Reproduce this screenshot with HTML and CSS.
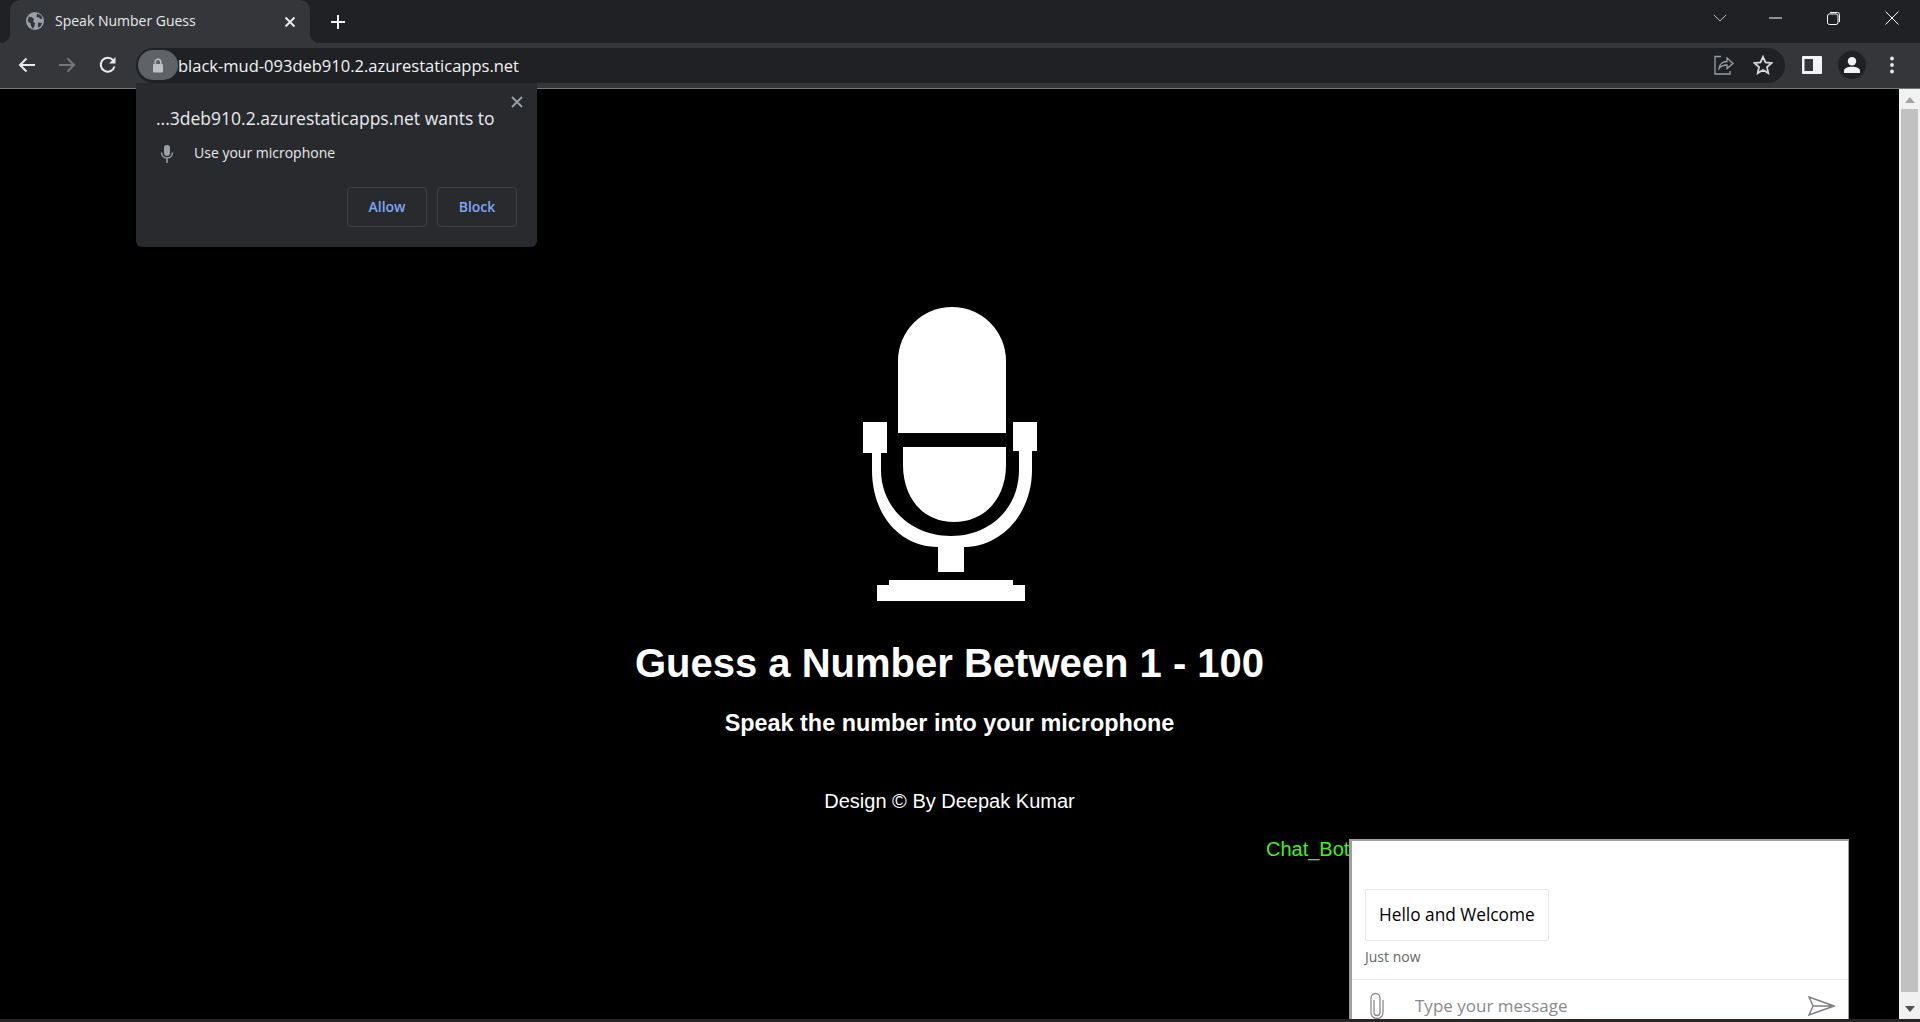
FILE: index.html
```html
<!DOCTYPE html>
<html lang="en">
<head>
  <meta charset="UTF-8">
  <title>Speak Number Guess</title>
  <link rel="stylesheet" href="styles.css">
</head>
<body>
  <div class="tabstrip">
    <div class="tab">
      <svg class="favicon" width="18" height="18" viewBox="0 0 18 18"><circle cx="9" cy="9" r="9" fill="#9aa0a6"/><path d="M3 4.500l3.500 1 1.500 2-1 2 2 1.500-.5 3-1.500 3-2-3-.5-2.500-3-2.500zM11 1.500l4 2 1.500 3-2 .5-1.500-1.500-2.500-.5zM12 10.500l4 .5-1.500 3.500-2.500 1z" fill="#35363a"/></svg>
      <span class="tab-title">Speak Number Guess</span>
      <svg class="tab-close" width="12" height="12" viewBox="0 0 12 12"><path d="M1.500 1.500l9 9M10.500 1.500l-9 9" stroke="#e8eaed" stroke-width="2"/></svg>
    </div>
    <svg class="new-tab" width="16" height="16" viewBox="0 0 16 16"><path d="M8 1v14M1 8h14" stroke="#f1f3f4" stroke-width="2"/></svg>
    <div class="win-controls">
      <button class="win-btn chevron"><svg width="14" height="8" viewBox="0 0 14 8"><path d="M1 1l6 6 6-6" fill="none" stroke="#bdc1c6"/></svg></button>
      <button class="win-btn"><svg width="14" height="14" viewBox="0 0 14 14"><path d="M0 7h13" stroke="#fff"/></svg></button>
      <button class="win-btn"><svg width="14" height="14" viewBox="0 0 14 14"><path d="M3 1.500h7.500a2 2 0 0 1 2 2V11" fill="none" stroke="#fff"/><rect x=".5" y="3" width="10.500" height="10.500" rx="2" fill="none" stroke="#fff"/></svg></button>
      <button class="win-btn"><svg width="14" height="14" viewBox="0 0 14 14"><path d="M.5.500l13 13M13.500.500l-13 13" stroke="#fff"/></svg></button>
    </div>
  </div>

  <div class="toolbar">
    <button class="tool-btn"><svg width="18" height="16" viewBox="0 0 18 16"><path d="M17 8H2M8.500 1.500L2 8l6.500 6.500" fill="none" stroke="#e8eaed" stroke-width="2"/></svg></button>
    <button class="tool-btn"><svg width="18" height="16" viewBox="0 0 18 16"><path d="M1 8h15M9.500 1.500L16 8l-6.500 6.500" fill="none" stroke="#75777b" stroke-width="2"/></svg></button>
    <button class="tool-btn"><svg width="18" height="18" viewBox="0 0 18 18"><path d="M15.500 10.500A7 7 0 1 1 14 4" fill="none" stroke="#e8eaed" stroke-width="2"/><path d="M16.500 1v6.500H10z" fill="#e8eaed"/></svg></button>
    <div class="omnibox">
      <span class="lock"><svg width="12" height="15" viewBox="0 0 12 15"><rect x="1" y="6" width="10" height="8.500" rx="1" fill="#bdc1c6"/><path d="M3.200 6.500V4a2.800 2.800 0 0 1 5.600 0v2.500" fill="none" stroke="#bdc1c6" stroke-width="1.400"/></svg></span>
      <span class="url">black-mud-093deb910.2.azurestaticapps.net</span>
      <button class="tool-btn omni-icon"><svg width="20" height="20" viewBox="0 0 20 20"><path d="M7 1.500H1v17.500h15v-3" fill="none" stroke="#9aa0a6" stroke-width="1.300"/><path d="M5 13.500c.5-4.500 4-7 8-7V3l6 5.500-6 5v-3.500c-3.500 0-6 1-8 3.500z" fill="none" stroke="#9aa0a6" stroke-width="1.300"/></svg></button>
      <button class="tool-btn omni-icon star"><svg width="20" height="20" viewBox="0 0 20 20"><path d="M10 1.800l2.500 5.600 6.100.6-4.600 4.100 1.300 6-5.300-3.100-5.300 3.100 1.300-6L1.400 8l6.100-.6z" fill="none" stroke="#d6d8da" stroke-width="1.800"/></svg></button>
    </div>
    <button class="tool-btn"><svg width="20" height="18" viewBox="0 0 20 18"><rect width="20" height="18" rx="1" fill="#f1f3f4"/><rect x="2.500" y="3" width="8.500" height="12" fill="#35363a"/></svg></button>
    <button class="tool-btn"><span class="avatar"><svg width="18" height="16" viewBox="0 0 18 16"><circle cx="9" cy="4.300" r="4.200" fill="#f1f3f4"/><path d="M1 16v-2.200c0-2.800 4-4 8-4s8 1.200 8 4V16z" fill="#f1f3f4"/></svg></span></button>
    <button class="tool-btn"><svg width="4" height="18" viewBox="0 0 4 18"><circle cx="2" cy="2.500" r="1.900" fill="#e8eaed"/><circle cx="2" cy="9" r="1.900" fill="#e8eaed"/><circle cx="2" cy="15.500" r="1.900" fill="#e8eaed"/></svg></button>
  </div>

  <div class="viewport">
    <main class="page">
      <svg class="mic" width="220" height="320" viewBox="0 0 220 320">
        <path d="M58 143V71a54 54 0 0 1 108 0v72z" fill="#fff"/>
        <path d="M63 157h103v18c0 33-21 57-52 57s-51-24-51-57z" fill="#fff"/>
        <path d="M23 132h24v31h-6v17c0 38 31 66 70 66s68-28 68-66v-19h-6v-29h24v29h-5v19c0 45-32 77-68 77v25H98v-25c-38 0-66-32-66-77v-17h-9z" fill="#fff"/>
        <path d="M49 290h124v5h12v16H37v-16h12z" fill="#fff"/>
      </svg>
      <h1 class="title">Guess a Number Between 1 - 100</h1>
      <h3 class="subtitle">Speak the number into your microphone</h3>
      <p class="credit">Design © By Deepak Kumar</p>
      <div class="bot-row"><span class="bot-label">Chat_Bot</span></div>

      <div class="permission">
        <svg class="perm-close" width="12" height="12" viewBox="0 0 12 12"><path d="M1 1l10 10M11 1L1 11" stroke="#9aa0a6" stroke-width="1.800"/></svg>
        <div class="perm-title">...3deb910.2.azurestaticapps.net wants to</div>
        <div class="perm-row">
          <svg width="14" height="20" viewBox="0 0 14 20"><rect x="4" y="1" width="6" height="11" rx="3" fill="#9aa0a6"/><path d="M1.500 8.500c0 3.500 2.500 5.500 5.500 5.500s5.500-2 5.500-5.500M7 14v5" fill="none" stroke="#9aa0a6" stroke-width="1.500"/></svg>
          <span class="perm-text">Use your microphone</span>
        </div>
        <div class="perm-actions">
          <button class="perm-btn">Allow</button>
          <button class="perm-btn">Block</button>
        </div>
      </div>

      <div class="chat">
        <div class="chat-log">
          <div class="bubble">Hello and Welcome</div>
          <div class="stamp">Just now</div>
        </div>
        <div class="chat-input">
          <svg class="clip" width="14" height="27" viewBox="0 0 14 27"><path d="M4 8v12.500a3 3 0 0 0 6 0V6a4.500 4.500 0 0 0-9 0v14.500a6 6 0 0 0 12 0V8" fill="none" stroke="#8a8a8a" stroke-width="1.300"/></svg>
          <span class="placeholder">Type your message</span>
          <svg width="27" height="20" viewBox="0 0 27 20"><path d="M1 1l25 9L1 19l4-9zM5 10h21" fill="none" stroke="#7f7f7f" stroke-width="1.400"/></svg>
        </div>
      </div>
    </main>
    <div class="scrollbar">
      <span class="arrow-up"></span>
      <span class="thumb"></span>
      <span class="arrow-down"></span>
    </div>
  </div>
  <div class="taskbar-edge"></div>
</body>
</html>
```

FILE: styles.css
```css
* {
  box-sizing: border-box;
}
html, body {
  height: 100%;
}
body {
  margin: 0;
  display: flex;
  flex-direction: column;
  overflow: hidden;
  background: #000;
  font-family: "Open Sans", sans-serif;
}
button {
  border: none;
  background: none;
  padding: 0;
  font-family: inherit;
}

/* browser chrome */
.tabstrip {
  flex: none;
  height: 43px;
  display: flex;
  align-items: center;
  background: #202124;
}
.tab {
  position: relative;
  align-self: flex-end;
  width: 300px;
  height: 43px;
  margin-left: 10px;
  padding: 0 14px 0 16px;
  display: flex;
  align-items: center;
  background: #35363a;
  border-radius: 10px 10px 0 0;
}
.tab::before,
.tab::after {
  content: "";
  position: absolute;
  bottom: 0;
  width: 10px;
  height: 10px;
}
.tab::before {
  left: -10px;
  background: radial-gradient(circle at 0 0, transparent 10px, #35363a 10.5px);
}
.tab::after {
  right: -10px;
  background: radial-gradient(circle at 100% 0, transparent 10px, #35363a 10.5px);
}
.favicon {
  flex: none;
  margin-top: -1px;
}
.tab-title {
  flex: 1;
  margin: 0 0 2px 11px;
  font-size: 14px;
  color: #e8eaed;
  white-space: nowrap;
}
.new-tab {
  margin-left: 20px;
}
.win-controls {
  margin-left: auto;
  height: 100%;
  display: flex;
}
.win-btn {
  width: 58px;
  height: 36px;
  display: flex;
  align-items: center;
  justify-content: center;
}
.win-btn:last-child {
  margin-right: -1px;
}
.chevron {
  width: 38px;
  margin-right: 8px;
}
.toolbar {
  flex: none;
  height: 46px;
  padding: 0 8px 1px 7px;
  display: flex;
  align-items: center;
  background: #35363a;
  border-bottom: 1px solid #75777b;
}
.tool-btn {
  flex: none;
  width: 40px;
  height: 36px;
  display: flex;
  align-items: center;
  justify-content: center;
}
.tool-btn:nth-child(3) {
  margin-left: 1px;
}
.omnibox {
  flex: 1;
  height: 35px;
  margin: 0 7px 0 8px;
  padding: 0 3px 0 2px;
  display: flex;
  align-items: center;
  background: #202124;
  border-radius: 18px;
}
.lock {
  width: 40px;
  height: 30px;
  display: flex;
  align-items: center;
  justify-content: center;
  background: #5f6368;
  border-radius: 15px;
}
.url {
  flex: 1;
  font-size: 16.500px;
  color: #f1f3f4;
}
.omni-icon {
  width: 39px;
}
.avatar {
  width: 28px;
  height: 28px;
  display: flex;
  align-items: center;
  justify-content: center;
  background: #202124;
  border-radius: 50%;
}

/* page */
.viewport {
  flex: 1;
  min-height: 0;
  display: flex;
}
.page {
  position: relative;
  flex: 1;
  padding-top: 201px;
  display: flex;
  flex-direction: column;
  align-items: center;
  background: #000;
  color: #fff;
  font-family: "Liberation Sans", Arial, sans-serif;
}
.mic {
  display: block;
}
.title {
  margin: 30px 0 0;
  font-size: 40px;
  line-height: 46px;
}
.subtitle {
  margin: 24px 0 0;
  font-size: 23.400px;
  line-height: 27px;
}
.credit {
  margin: 53px 0 0;
  font-size: 20px;
  line-height: 23px;
}
.bot-row {
  align-self: stretch;
  margin-top: 25px;
  padding-left: 1266px;
}
.bot-label {
  font-size: 20px;
  line-height: 23px;
  color: #40f020;
}

/* permission prompt */
.permission {
  position: absolute;
  top: -6px;
  left: 136px;
  width: 401px;
  height: 164px;
  padding: 24px 20px 0;
  background: #292a2d;
  border-radius: 0 0 6px 6px;
  color: #e8eaed;
  font-family: "Open Sans", sans-serif;
}
.perm-close {
  position: absolute;
  top: 13px;
  right: 14px;
}
.perm-title {
  font-size: 17.500px;
  line-height: 22px;
  white-space: nowrap;
}
.perm-row {
  margin-top: 14px;
  padding-left: 4px;
  display: flex;
  align-items: center;
  gap: 20px;
  font-size: 14px;
}
.perm-text {
  margin-bottom: 2px;
}
.perm-actions {
  margin-top: 23px;
  display: flex;
  justify-content: flex-end;
  gap: 10px;
}
.perm-btn {
  width: 80px;
  height: 40px;
  padding-bottom: 2px;
  border: 1px solid #3c4043;
  border-radius: 4px;
  font-size: 14px;
  font-weight: 600;
  color: #7ea6f4;
}

/* chat widget */
.chat {
  position: absolute;
  left: 1349px;
  top: 750px;
  width: 500px;
  bottom: 0;
  overflow: hidden;
  background: #fff;
  border: 2px solid #a0a0a0;
  border-bottom: none;
  border-left-width: 3px;
  border-right-width: 1px;
  color: #000;
  font-family: "Open Sans", sans-serif;
}
.chat-log {
  height: 139px;
  padding: 48px 13px 0;
  border-bottom: 1px solid #e6e6e6;
}
.bubble {
  display: inline-block;
  height: 52px;
  padding: 0 13px;
  line-height: 50px;
  border: 1px solid #e6e6e6;
  border-radius: 2px;
  font-size: 17.300px;
}
.stamp {
  margin-top: 6px;
  font-size: 14px;
  color: #666;
}
.chat-input {
  height: 52px;
  padding: 0 13px 0 18px;
  display: flex;
  align-items: center;
  color: #8a8a8a;
}
.clip {
  flex: none;
  margin-bottom: 2px;
}
.placeholder {
  flex: 1;
  margin: 0 0 2px 31px;
  font-size: 17px;
}

/* fake scrollbar */
.scrollbar {
  flex: none;
  width: 21px;
  padding: 0 2px;
  display: flex;
  flex-direction: column;
  align-items: center;
  background: #f1f1f1;
}
.thumb {
  flex: 1;
  align-self: stretch;
  background: #c1c1c1;
}
.arrow-up,
.arrow-down {
  flex: none;
  width: 0;
  height: 0;
  border-left: 5px solid transparent;
  border-right: 5px solid transparent;
}
.arrow-up {
  margin: 8px 0 6px;
  border-bottom: 6px solid #a3a3a3;
}
.arrow-down {
  margin: 14px 0 7px;
  border-top: 6px solid #505050;
}
.taskbar-edge {
  flex: none;
  height: 3px;
  background: #2a2422;
}
```
